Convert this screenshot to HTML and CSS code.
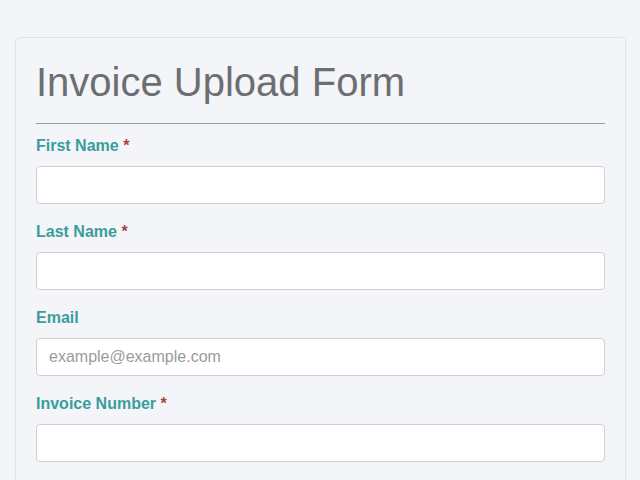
FILE: index.html
```html
<!DOCTYPE html>
<html lang="en">
<head>
    <meta charset="UTF-8">
    <meta name="viewport" content="width=device-width, initial-scale=1.0">
    <title>Invoice Upload Form</title>
    <link rel="stylesheet" href="styles.css">
</head>
<body>

<div class="container">
    <form class="cartao">
        <h1 class="titulo">Invoice Upload Form</h1>
        <hr class="divisor">

        <div class="grupo">
            <label class="rotulo" for="firstName">First Name <span class="obrigatorio">*</span></label>
            <input class="campo" type="text" id="firstName">
        </div>

        <div class="grupo">
            <label class="rotulo" for="lastName">Last Name <span class="obrigatorio">*</span></label>
            <input class="campo" type="text" id="lastName">
        </div>

        <div class="grupo">
            <label class="rotulo" for="email">Email</label>
            <input class="campo" type="email" id="email" placeholder="example@example.com">
        </div>

        <div class="grupo">
            <label class="rotulo" for="invoiceNumber">Invoice Number <span class="obrigatorio">*</span></label>
            <input class="campo" type="text" id="invoiceNumber">
        </div>
    </form>
</div>

</body>
</html>
```

FILE: styles.css
```css
* {
    box-sizing: border-box;
}

body {
    font-family: "Liberation Sans", Arial, sans-serif;
    background-color: #f4f5f9;
    margin: 0;
}

.container {
    padding: 37px 14px 37px 15px;
}

.cartao {
    background-color: #f4f5f9;
    border: 1px solid #e2e3e7;
    border-radius: 5px;
    box-shadow: 0px 1px 3px rgba(0, 0, 0, 0.04);
    padding: 20px;
}

.titulo {
    font-size: 40px;
    font-weight: normal;
    line-height: 48px;
    color: #6c6e72;
    margin: 0 0 17px 0;
}

.divisor {
    border: none;
    border-top: 1px solid #9a9b9e;
    margin: 0 0 10px 0;
}

.grupo {
    margin-bottom: 16px;
}

.rotulo {
    display: block;
    font-size: 16px;
    font-weight: bold;
    line-height: 24px;
    color: #3a9d9b;
    margin-bottom: 8px;
}

.obrigatorio {
    color: #a94442;
}

.campo {
    display: block;
    width: 100%;
    height: 38px;
    padding: 6px 12px;
    font-family: "Liberation Sans", Arial, sans-serif;
    font-size: 16px;
    color: #495057;
    background-color: #fff;
    border: 1px solid #ced0d4;
    border-radius: 4px;
}

.campo::placeholder {
    color: #9a9b9e;
}
```
